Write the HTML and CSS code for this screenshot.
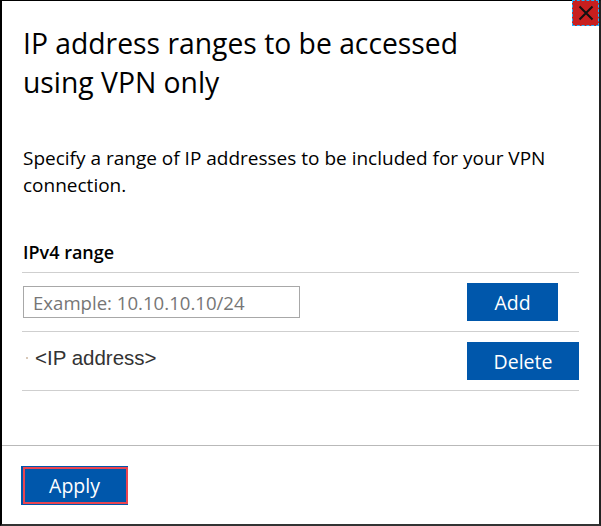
FILE: index.html
```html
<!DOCTYPE html>
<html lang="en">
<head>
<meta charset="utf-8">
<title>IP address ranges</title>
<link rel="stylesheet" href="styles.css">
</head>
<body>
<div class="window">
  <button class="close" aria-label="Close">
    <svg width="16" height="16" viewBox="0 0 16 16"><path d="M1.5 1.5 L14.5 14.5 M14.5 1.5 L1.5 14.5" stroke="#111" stroke-width="2" fill="none"/></svg>
  </button>
  <div class="main">
    <h1 class="title">IP address ranges to be accessed using VPN only</h1>
    <p class="desc">Specify a range of IP addresses to be included for your VPN connection.</p>
    <div class="label">IPv4 range</div>
    <div class="row row-first">
      <input class="field" type="text" placeholder="Example: 10.10.10.10/24">
      <button class="btn btn-add">Add</button>
    </div>
    <div class="row row-last">
      <div class="entry"><span class="dot"></span><span class="ip">&lt;IP address&gt;</span></div>
      <button class="btn btn-delete">Delete</button>
    </div>
  </div>
  <div class="footer">
    <button class="btn btn-apply">Apply</button>
  </div>
</div>
</body>
</html>
```
FILE: styles.css
```css
html, body {
  margin: 0;
  padding: 0;
  background: #fff;
}
.window {
  position: relative;
  box-sizing: border-box;
  width: 601px;
  height: 526px;
  border-top: 1px solid #000;
  border-left: 2px solid #000;
  border-right: 2px solid #222;
  border-bottom: 2px solid #333;
  display: flex;
  flex-direction: column;
  font-family: "Open Sans", "Noto Sans", sans-serif;
  color: #000;
}
.close {
  position: absolute;
  top: -1px;
  right: 0;
  width: 27px;
  height: 26px;
  box-sizing: border-box;
  background: #c81f1f;
  border: 1px dashed #21b4ff;
  padding: 0;
  display: flex;
  align-items: center;
  justify-content: center;
}
.main {
  flex: 1;
  padding: 0 20px;
}
.title {
  margin: 22.5px 0 0 1px;
  font-size: 28.3px;
  line-height: 39px;
  font-weight: 400;
  width: 470px;
}
.desc {
  margin: 43.5px 0 0 1px;
  font-size: 19px;
  line-height: 27px;
}
.label {
  margin: 41px 0 0 1px;
  font-size: 18px;
  line-height: 24px;
  font-weight: 600;
  padding-bottom: 8px;
}
.row {
  display: grid;
  grid-template-columns: 1fr 112px;
  align-items: center;
  box-sizing: border-box;
  border-top: 1px solid #cfcfcf;
}
.row-first {
  height: 59px;
}
.row-last {
  height: 60px;
  border-bottom: 1px solid #cfcfcf;
}
.field {
  box-sizing: border-box;
  width: 277px;
  height: 32px;
  margin-left: 1px;
  border: 1px solid #a8a8a8;
  padding: 0 9px;
  font-family: "Open Sans", "Noto Sans", sans-serif;
  font-size: 18.6px;
  color: #333;
  outline: none;
}
.field::placeholder {
  color: #767676;
}
.entry {
  display: flex;
  align-items: center;
  margin-top: -7px;
}
.dot {
  width: 2px;
  height: 2px;
  background: #d8c8b8;
  margin-left: 4px;
  margin-right: 7px;
}
.ip {
  font-family: "Liberation Sans", Arial, sans-serif;
  font-size: 20.5px;
  color: #333;
}
.btn {
  box-sizing: border-box;
  background: #0057ab;
  color: #fff;
  border: none;
  font-family: "Open Sans", "Noto Sans", sans-serif;
  font-size: 19.5px;
  height: 38px;
  padding: 0;
}
.btn-add {
  width: 91px;
  justify-self: start;
}
.btn-delete {
  width: 112px;
}
.footer {
  box-sizing: border-box;
  height: 79px;
  border-top: 1px solid #b9b9b9;
  padding: 20px 0 0 19px;
}
.btn-apply {
  position: relative;
  width: 107px;
  height: 39px;
  font-size: 19.5px;
}
.btn-apply::after {
  content: "";
  position: absolute;
  left: 2px;
  top: 1px;
  right: 0;
  bottom: 1px;
  border: 2px solid #ea4450;
}
```
